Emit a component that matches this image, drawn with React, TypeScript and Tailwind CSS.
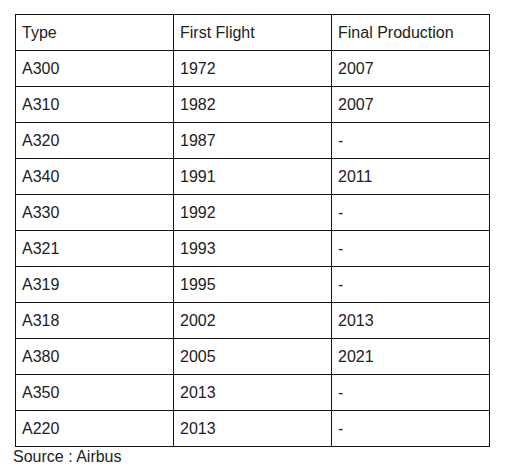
const rows: [string, string, string][] = [
  ['A300', '1972', '2007'],
  ['A310', '1982', '2007'],
  ['A320', '1987', '-'],
  ['A340', '1991', '2011'],
  ['A330', '1992', '-'],
  ['A321', '1993', '-'],
  ['A319', '1995', '-'],
  ['A318', '2002', '2013'],
  ['A380', '2005', '2021'],
  ['A350', '2013', '-'],
  ['A220', '2013', '-'],
];

export default function App() {
  const cell = 'border border-[#111] h-[36px] pl-[6px] pr-2 py-0 text-left align-middle font-normal';
  return (
    <div
      className="w-[506px] h-[471px] bg-white text-[#222] text-[16px] leading-none"
      style={{ fontFamily: '"Liberation Sans", Arial, sans-serif' }}
    >
      <div className="pl-[15px] pt-[14px]">
        <table className="border-collapse w-[475px] table-fixed">
          <thead>
            <tr>
              <th className={cell}>Type</th>
              <th className={cell}>First Flight</th>
              <th className={cell}>Final Production</th>
            </tr>
          </thead>
          <tbody>
            {rows.map((r) => (
              <tr key={r[0]}>
                {r.map((v, i) => (
                  <td key={i} className={cell}>
                    {v}
                  </td>
                ))}
              </tr>
            ))}
          </tbody>
        </table>
      </div>
      <p className="pl-[13px] pt-[2px]">Source : Airbus</p>
    </div>
  );
}
